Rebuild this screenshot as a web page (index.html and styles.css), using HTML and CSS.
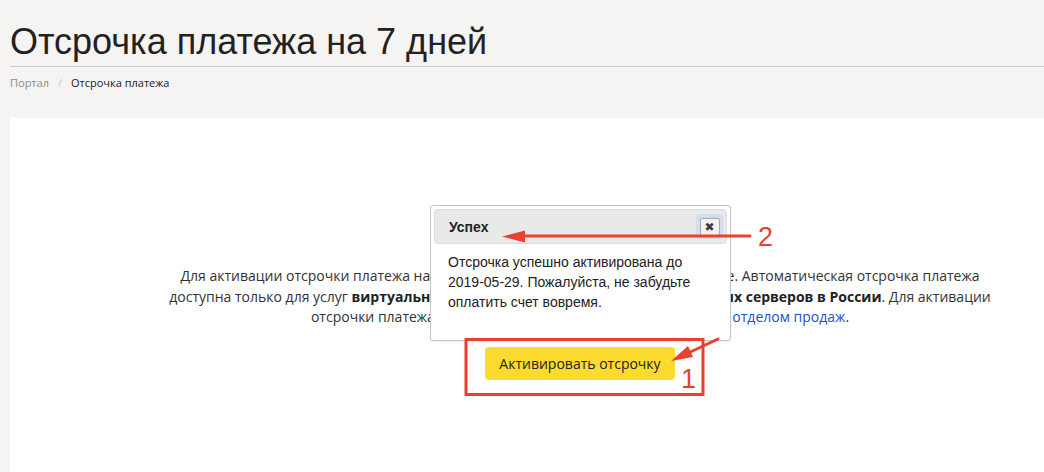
FILE: index.html
```html
<!DOCTYPE html>
<html lang="ru">
<head>
<meta charset="utf-8">
<title>Отсрочка платежа на 7 дней</title>
<link rel="stylesheet" href="styles.css">
</head>
<body>
<div class="page">
  <header class="page-head">
    <h1 class="title">Отсрочка платежа на 7 дней</h1>
  </header>
  <nav class="crumbs">
    <span class="crumb-link">Портал</span>
    <span class="crumb-sep">/</span>
    <span class="crumb-cur">Отсрочка платежа</span>
  </nav>
  <main class="panel">
    <p class="info">
      Для активации отсрочки платежа на 7 дней нажмите на кнопку, указанную ниже. Автоматическая отсрочка платежа<br>
      доступна только для услуг <b>виртуального хостинга, виртуальных и выделенных серверов в России</b>. Для активации<br>
      отсрочки платежа на другие услуги, пожалуйста, свяжитесь с <a class="link" href="#">отделом продаж</a>.
    </p>
    <button class="btn">Активировать отсрочку</button>
  </main>
</div>

<div class="dialog">
  <div class="dialog-head">
    <span class="dialog-title">Успех</span>
    <span class="close-wrap"><span class="close">&#x2716;</span></span>
  </div>
  <div class="dialog-body">Отсрочка успешно активирована до 2019-05-29. Пожалуйста, не забудьте оплатить счет вовремя.</div>
</div>

<svg class="marks" width="1044" height="472" viewBox="0 0 1044 472">
  <rect x="466" y="339.5" width="237" height="55" fill="none" stroke="#e8412f" stroke-width="3"/>
  <line x1="718" y1="339" x2="684" y2="355" stroke="#e8412f" stroke-width="3" stroke-linecap="round"/>
  <polygon points="671,361 688,346 693,357" fill="#e8412f"/>
  <line x1="750" y1="236" x2="520" y2="236" stroke="#e8412f" stroke-width="3" stroke-linecap="round"/>
  <polygon points="502,236.5 525,230.5 525,242.5" fill="#e8412f"/>
  <text x="681" y="388" class="mark-num">1</text>
  <text x="758" y="246" class="mark-num">2</text>
</svg>
</body>
</html>
```

FILE: styles.css
```css
html, body {
  margin: 0;
  padding: 0;
}
body {
  background: #f5f4f2;
  width: 1044px;
  height: 472px;
  overflow: hidden;
  position: relative;
  font-family: "Open Sans", "Liberation Sans", sans-serif;
  color: #333;
}
.page {
  padding-left: 10px;
}
.page-head {
  padding-top: 20px;
  border-bottom: 1px solid #cfcecb;
}
.title {
  margin: 0;
  padding-bottom: 3px;
  font-family: "Liberation Sans", Arial, sans-serif;
  font-weight: normal;
  font-size: 36px;
  line-height: 43px;
  color: #222;
}
.crumbs {
  margin-top: 8px;
  font-size: 11px;
  line-height: 16px;
  display: flex;
  gap: 9px;
}
.crumb-link {
  color: #8a8a8a;
}
.crumb-sep {
  color: #c8c8c8;
}
.crumb-cur {
  color: #222;
}
.panel {
  margin-top: 27px;
  width: 1140px;
  height: 400px;
  background: #fff;
  display: flex;
  flex-direction: column;
  align-items: center;
  padding-top: 148px;
  box-sizing: border-box;
}
.info {
  margin: 0;
  text-align: center;
  font-size: 14px;
  line-height: 20.5px;
  color: #333;
}
.info b {
  font-weight: bold;
  color: #222;
}
.link {
  color: #1c4ed0;
  text-decoration: none;
}
.btn {
  margin-top: 19px;
  height: 33px;
  padding: 0 14px;
  background: #fddb2e;
  border: none;
  border-radius: 4px;
  font-family: "Open Sans", sans-serif;
  font-size: 14px;
  color: #222;
}
.dialog {
  position: absolute;
  left: 430px;
  top: 205px;
  width: 301px;
  height: 136px;
  box-sizing: border-box;
  border: 1px solid #c4c4c4;
  border-radius: 3px;
  background: #fff;
  padding: 3px;
  box-shadow: 0 1px 2px rgba(0,0,0,0.08);
  font-family: "Liberation Sans", Arial, sans-serif;
}
.dialog-head {
  height: 35px;
  box-sizing: border-box;
  background: #e9e9e9;
  border: 1px solid #dcdcdc;
  border-radius: 4px;
  display: flex;
  align-items: center;
  justify-content: space-between;
  padding: 0 3px 0 14px;
}
.dialog-title {
  font-weight: bold;
  font-size: 14px;
  color: #222;
}
.close-wrap {
  width: 27px;
  height: 25px;
  box-sizing: border-box;
  border-radius: 4px;
  background: #d3ddf0;
  display: flex;
  align-items: center;
  justify-content: center;
}
.close {
  width: 20px;
  height: 18px;
  box-sizing: border-box;
  border: 1px solid #a8a8a8;
  border-radius: 2px;
  background: #f2f2f2;
  color: #3a3a3a;
  font-size: 12px;
  font-weight: bold;
  line-height: 16px;
  text-align: center;
  font-family: "DejaVu Sans", sans-serif;
}
.dialog-body {
  padding: 8px 14px 0 14px;
  font-size: 14px;
  line-height: 20px;
  color: #222;
}
.marks {
  position: absolute;
  left: 0;
  top: 0;
  pointer-events: none;
}
.mark-num {
  font-family: "Liberation Sans", Arial, sans-serif;
  font-size: 27px;
  fill: #e8412f;
}
```
